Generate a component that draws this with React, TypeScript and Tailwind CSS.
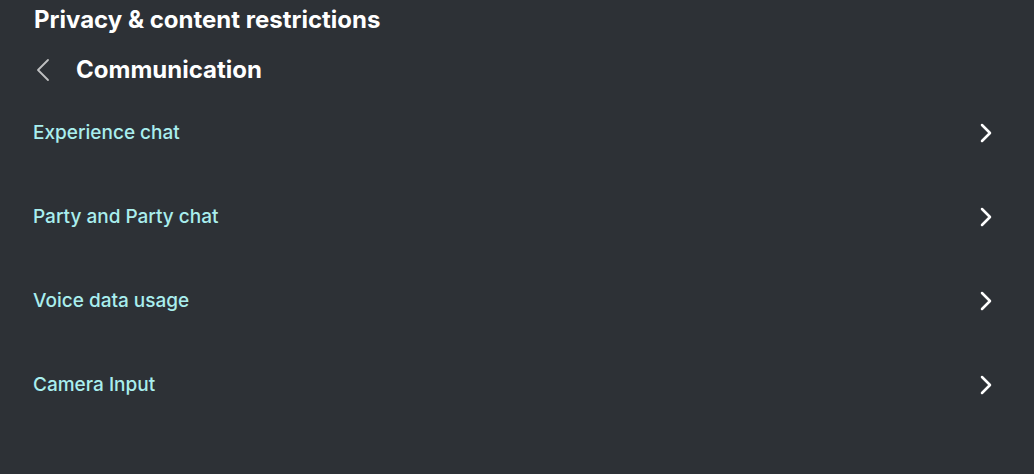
import { ChevronLeft, ChevronRight } from 'lucide-react'

const items = ['Experience chat', 'Party and Party chat', 'Voice data usage', 'Camera Input']

export default function App() {
  return (
    <div className="h-[474px] w-[1034px] overflow-hidden bg-[#2d3136] font-['Inter',sans-serif] text-white">
      <h1 className="px-[34px] pt-[4px] text-[24px] font-bold leading-[32px]">Privacy &amp; content restrictions</h1>
      <div className="mt-[18px] flex h-[32px] items-center pl-[23px]">
        <ChevronLeft size={40} strokeWidth={1.1} className="text-[#bfc0c1]" />
        <h2 className="ml-[13px] text-[24px] font-bold leading-[32px]">Communication</h2>
      </div>
      <ul className="mt-[5px]">
        {items.map((item) => (
          <li key={item} className="flex h-[84px] items-center justify-between pl-[33px] pr-[32px]">
            <span className="text-[19px] font-medium text-[#a9eeee]">{item}</span>
            <ChevronRight size={32} strokeWidth={1.9} className="text-white" />
          </li>
        ))}
      </ul>
    </div>
  )
}
